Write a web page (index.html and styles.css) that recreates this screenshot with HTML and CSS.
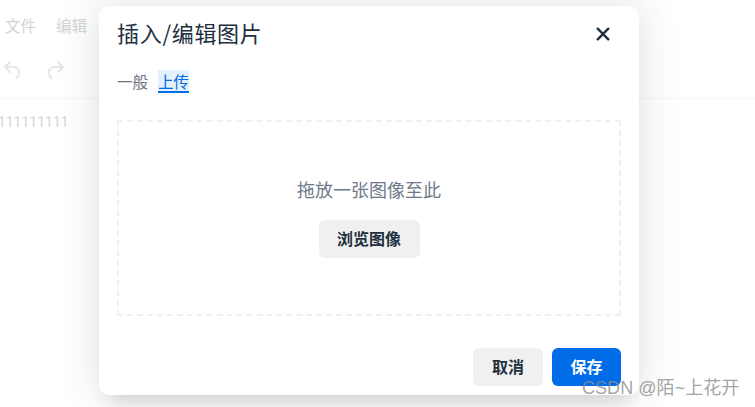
FILE: index.html
```html
<!DOCTYPE html>
<html lang="zh">
<head>
<meta charset="utf-8">
<title>插入/编辑图片</title>
<link rel="stylesheet" href="styles.css">
</head>
<body>
<div class="editor">
  <div class="menubar"><span>文件</span><span>编辑</span></div>
  <div class="toolbar">
    <svg class="tool" viewBox="0 0 24 24"><path d="M6.4 8H12c3.7 0 6.2 2 6.8 5.1.6 2.7-.4 5.6-2.4 7.7a1 1 0 0 1-1.5-1.4c1.6-1.6 2.4-4 2-6-.5-2.2-2.3-3.4-4.9-3.4H6.4l3.3 3.3a1 1 0 1 1-1.4 1.4l-5-5a1 1 0 0 1 0-1.4l5-5a1 1 0 0 1 1.4 1.4L6.4 8z"/></svg>
    <svg class="tool" viewBox="0 0 24 24"><path d="M17.6 10H12c-2.8 0-4.4 1.4-4.9 3.5-.4 2 .3 4.5 2 6a1 1 0 1 1-1.5 1.4c-2-2-2.9-5-2.4-7.7C5.8 10 8.3 8 12 8h5.6l-3.3-3.3a1 1 0 1 1 1.4-1.4l5 5a1 1 0 0 1 0 1.4l-5 5a1 1 0 0 1-1.4-1.4l3.3-3.3z"/></svg>
  </div>
  <div class="content">1111111111</div>
</div>

<section class="dialog">
  <header class="dialog-head">
    <h1 class="dialog-title">插入/编辑图片</h1>
    <svg class="close" viewBox="0 0 24 24"><path d="M17.3 8.2L13.4 12l3.9 3.8a1 1 0 0 1-1.5 1.5L12 13.4l-3.8 3.9a1 1 0 0 1-1.5-1.5l3.9-3.8-3.9-3.8a1 1 0 0 1 1.5-1.5l3.8 3.9 3.8-3.9a1 1 0 0 1 1.5 1.5z"/></svg>
  </header>
  <nav class="tabs">
    <span class="tab">一般</span>
    <span class="tab tab-active">上传</span>
  </nav>
  <div class="dropzone">
    <p class="drop-text">拖放一张图像至此</p>
    <button class="btn btn-secondary btn-browse" type="button">浏览图像</button>
  </div>
  <footer class="dialog-foot">
    <button class="btn btn-secondary btn-cancel" type="button">取消</button>
    <button class="btn btn-primary" type="button">保存</button>
  </footer>
</section>

<div class="watermark">CSDN @陌~上花开</div>
</body>
</html>
```
FILE: styles.css
```css
* { box-sizing: border-box; }
html, body { height: 100%; }
body {
  margin: 0;
  overflow: hidden;
  background: #fff;
  font-family: "Noto Sans CJK SC", "Liberation Sans", sans-serif;
}
.editor { color: #d4d4d4; }
.menubar {
  display: flex;
  gap: 20px;
  height: 46px;
  padding: 14px 0 0 5px;
  font-size: 15.5px;
  line-height: 22px;
}
.toolbar {
  display: flex;
  gap: 18px;
  height: 53px;
  padding: 12px 0 0 1px;
  border-bottom: 1px solid #f6f6f7;
}
.tool { width: 24px; height: 24px; fill: #e5e6e8; }
.content {
  margin-left: -10px;
  padding-top: 13px;
  font-family: Roboto, sans-serif;
  font-size: 14px;
  line-height: 20px;
}
.dialog {
  position: absolute;
  left: 99px;
  top: 6px;
  width: 540px;
  height: 389px;
  display: flex;
  flex-direction: column;
  padding: 0 18px 9px;
  background: #fff;
  border-radius: 10px;
  box-shadow: 0 16px 16px -10px rgba(34, 47, 62, .15), 0 0 40px 1px rgba(34, 47, 62, .15);
}
.dialog-head {
  display: flex;
  justify-content: space-between;
  align-items: center;
  height: 56px;
}
.dialog-title {
  margin: -4px 0 0;
  font-size: 22px;
  font-weight: 400;
  line-height: 30px;
  letter-spacing: .7px;
  color: #222f3e;
}
.close { width: 28px; height: 28px; fill: #222f3e; margin-right: 4px; }
.tabs {
  display: flex;
  gap: 10px;
  height: 58px;
  padding-top: 8px;
  font-size: 15.5px;
  line-height: 22px;
  color: #6b7280;
}
.tab { height: 23px; }
.tab-active {
  color: #006ce7;
  background: #e5f0fd;
  border-bottom: 2px solid #006ce7;
}
.dropzone {
  display: flex;
  flex-direction: column;
  align-items: center;
  width: 504px;
  height: 196px;
  padding-top: 54px;
  border: 2px dashed #eef0f2;
}
.drop-text {
  margin: 0 0 18px;
  font-size: 18px;
  line-height: 26px;
  color: #6d7a8c;
}
.dialog-foot {
  display: flex;
  justify-content: flex-end;
  gap: 9px;
  margin-top: auto;
}
.btn {
  height: 38px;
  padding: 0 0 2px;
  border: 0;
  border-radius: 6px;
  font: 700 16px/36px "Noto Sans CJK SC", "Liberation Sans", sans-serif;
}
.btn-secondary { background: #f0f0f0; color: #222f3e; }
.btn-primary { width: 69px; background: #006ce7; color: #fff; }
.btn-browse { width: 101px; }
.btn-cancel { width: 70px; }
.watermark {
  position: absolute;
  left: 582px;
  top: 376px;
  font-family: "Liberation Sans", "Noto Sans CJK SC", sans-serif;
  font-size: 18px;
  line-height: 24px;
  letter-spacing: .05px;
  color: rgba(140, 140, 140, .8);
  white-space: nowrap;
}
```
